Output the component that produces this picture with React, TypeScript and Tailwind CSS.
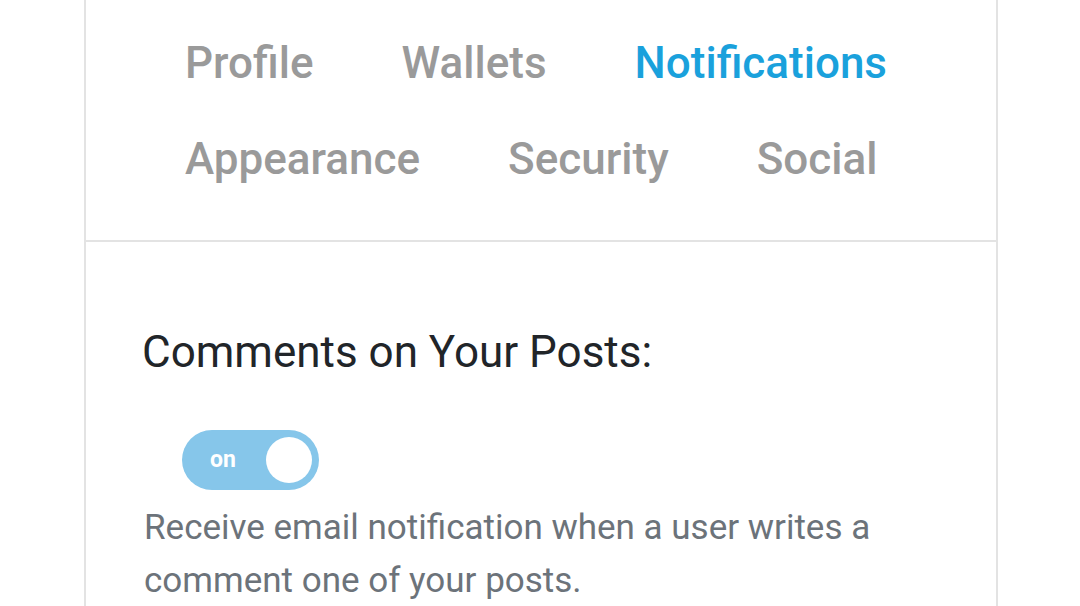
// App.tsx - Account settings, notifications tab
import { useState } from 'react';

const tabs = ['Profile', 'Wallets', 'Notifications', 'Appearance', 'Security', 'Social'];

export default function App() {
  const [active, setActive] = useState('Notifications');
  const [commentsOn, setCommentsOn] = useState(true);

  return (
    <div className="h-[606px] overflow-hidden bg-white" style={{ fontFamily: 'Roboto, "Noto Sans", sans-serif' }}>
      <div className="ml-[84px] w-[914px] min-h-[606px] border-x-2 border-[#e3e3e3]">
        <nav className="flex flex-wrap gap-x-[88px] pl-[99px] pr-[30px] pt-[15px] pb-[33px] border-b-2 border-[#e3e3e3]">
          {tabs.map(tab => (
            <button
              key={tab}
              type="button"
              onClick={() => setActive(tab)}
              className={`text-[44px] leading-[96px] font-medium ${active === tab ? 'text-[#1aa1dc]' : 'text-[#9a9a9a]'}`}
            >
              {tab}
            </button>
          ))}
        </nav>

        <section className="pl-[56px] pr-[56px] pt-[84px]">
          <h3 className="text-[44px] leading-[52px] text-[#212529]">Comments on Your Posts:</h3>

          <button
            type="button"
            onClick={() => setCommentsOn(v => !v)}
            className={`mt-[52px] ml-[40px] w-[137px] h-[60px] rounded-full flex items-center justify-between pl-[28px] pr-[7px] ${commentsOn ? 'bg-[#86c6ea]' : 'bg-[#cfd4d8]'}`}
            aria-pressed={commentsOn}
          >
            <span className="text-[23px] font-bold text-white">{commentsOn ? 'on' : 'off'}</span>
            <span className="w-[46px] h-[46px] rounded-full bg-white" />
          </button>

          <p className="mt-[11px] ml-[2px] text-[35px] leading-[53px] text-[#6c737a]">
            Receive email notification when a user writes a comment one of your posts.
          </p>
        </section>
      </div>
    </div>
  );
}
